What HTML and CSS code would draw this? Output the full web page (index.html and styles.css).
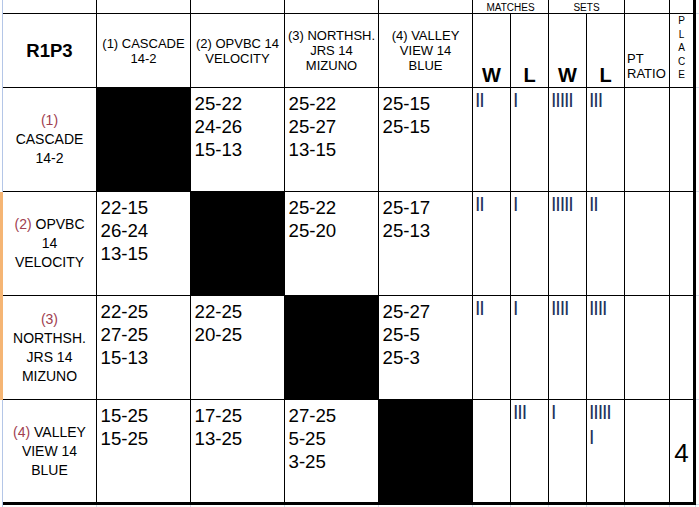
FILE: index.html
```html
<!DOCTYPE html>
<html>
<head>
<meta charset="utf-8">
<title>R1P3</title>
<link rel="stylesheet" href="styles.css">
</head>
<body>
<div class="sheet">
  <!-- top label row -->
  <div class="c"></div>
  <div class="c"></div>
  <div class="c"></div>
  <div class="c"></div>
  <div class="c"></div>
  <div class="c group">MATCHES</div>
  <div class="c group">SETS</div>
  <div class="c"></div>
  <div class="c last"></div>
  <div class="edge"></div>

  <!-- header row -->
  <div class="c pool">R1P3</div>
  <div class="c hteam"><span>(1) CASCADE<br>14-2</span></div>
  <div class="c hteam"><span>(2) OPVBC 14<br>VELOCITY</span></div>
  <div class="c hteam"><span>(3) NORTHSH.<br>JRS 14<br>MIZUNO</span></div>
  <div class="c hteam"><span>(4) VALLEY<br>VIEW 14<br>BLUE</span></div>
  <div class="c wl">W</div>
  <div class="c wl">L</div>
  <div class="c wl">W</div>
  <div class="c wl">L</div>
  <div class="c ratio"><span>PT<br>RATIO</span></div>
  <div class="c last place-h">P<br>L<br>A<br>C<br>E</div>
  <div class="edge"></div>

  <!-- team 1 -->
  <div class="c team"><span><span class="seed">(1)</span><br>CASCADE<br>14-2</span></div>
  <div class="c self"></div>
  <div class="c score">25-22<br>24-26<br>15-13</div>
  <div class="c score">25-22<br>25-27<br>13-15</div>
  <div class="c score">25-15<br>25-15</div>
  <div class="c tally">II</div>
  <div class="c tally">I</div>
  <div class="c tally">IIIII</div>
  <div class="c tally">III</div>
  <div class="c"></div>
  <div class="c last"></div>
  <div class="edge"></div>

  <!-- team 2 -->
  <div class="c team sel"><span><span class="seed">(2)</span> OPVBC<br>14<br>VELOCITY</span></div>
  <div class="c score">22-15<br>26-24<br>13-15</div>
  <div class="c self"></div>
  <div class="c score">25-22<br>25-20</div>
  <div class="c score">25-17<br>25-13</div>
  <div class="c tally">II</div>
  <div class="c tally">I</div>
  <div class="c tally">IIIII</div>
  <div class="c tally">II</div>
  <div class="c"></div>
  <div class="c last"></div>
  <div class="edge"></div>

  <!-- team 3 -->
  <div class="c team sel"><span><span class="seed">(3)</span><br>NORTHSH.<br>JRS 14<br>MIZUNO</span></div>
  <div class="c score">22-25<br>27-25<br>15-13</div>
  <div class="c score">22-25<br>20-25</div>
  <div class="c self"></div>
  <div class="c score">25-27<br>25-5<br>25-3</div>
  <div class="c tally">II</div>
  <div class="c tally">I</div>
  <div class="c tally">IIII</div>
  <div class="c tally">IIII</div>
  <div class="c"></div>
  <div class="c last"></div>
  <div class="edge"></div>

  <!-- team 4 -->
  <div class="c end team"><span><span class="seed">(4)</span> VALLEY<br>VIEW 14<br>BLUE</span></div>
  <div class="c end score">15-25<br>15-25</div>
  <div class="c end score">17-25<br>13-25</div>
  <div class="c end score">27-25<br>5-25<br>3-25</div>
  <div class="c end self"></div>
  <div class="c end tally"></div>
  <div class="c end tally">III</div>
  <div class="c end tally">I</div>
  <div class="c end tally">IIIII<br>I</div>
  <div class="c end"></div>
  <div class="c end last place">4</div>
  <div class="edge"></div>

  <!-- sheet gridlines below the table -->
  <div class="foot"></div><div class="foot"></div><div class="foot"></div><div class="foot"></div>
  <div class="foot"></div><div class="foot"></div><div class="foot"></div><div class="foot"></div>
  <div class="foot"></div><div class="foot"></div><div class="foot"></div><div class="foot"></div>
</div>
</body>
</html>
```

FILE: styles.css
```css
html, body {
  margin: 0;
  padding: 0;
  background: #fff;
}

body {
  font-family: "Liberation Sans", Arial, sans-serif;
  color: #000;
}

.sheet {
  display: grid;
  grid-template-columns: 94px 94px 94px 94px 94px 38px 38px 38px 38px 45px 26px 4px;
  grid-template-rows: 14px 74px 104px 104px 104px 105px 3px;
  margin-left: 2px;
  width: 693px;
  border-left: 1px solid #b4c6e7;
}

.c {
  box-sizing: border-box;
  border-right: 1px solid #000;
  border-bottom: 1px solid #000;
  min-width: 0;
}

.c.last {
  border-right: 3px solid #000;
}

.c.end {
  border-bottom: 3px solid #000;
}

.edge {
  box-sizing: border-box;
  border-bottom: 1px solid #d4dbe8;
}

.foot {
  box-sizing: border-box;
  border-right: 1px solid #d4dbe8;
}

/* top label row */
.group {
  grid-column: span 2;
  font-size: 10px;
  line-height: 13px;
  padding-top: 1px;
  text-align: center;
}

/* header row */
.pool {
  display: flex;
  align-items: center;
  justify-content: center;
  font-size: 18.5px;
  font-weight: bold;
}

.hteam {
  display: flex;
  align-items: center;
  justify-content: center;
  text-align: center;
  font-size: 13px;
  line-height: 15px;
}

.wl {
  display: flex;
  align-items: flex-end;
  justify-content: center;
  font-size: 20px;
  line-height: 20px;
  font-weight: bold;
  padding-bottom: 2px;
}

.ratio {
  display: flex;
  align-items: flex-end;
  font-size: 13px;
  line-height: 15px;
  padding: 0 0 6px 2px;
}

.place-h {
  text-align: center;
  font-size: 10px;
  line-height: 13.5px;
}

/* body rows */
.team {
  display: flex;
  align-items: center;
  justify-content: center;
  text-align: center;
  font-size: 14px;
  line-height: 19px;
  padding: 0 2px;
}

.team.sel {
  box-shadow: -3px 0 0 #f5b574;
}

.seed {
  color: #a0404f;
}

.self {
  background: #000;
}

.score {
  font-size: 18.67px;
  line-height: 23.3px;
  padding: 3.5px 0 0 3.5px;
}

.tally {
  font-size: 19.5px;
  line-height: 25px;
  letter-spacing: -1.1px;
  color: #23335e;
  padding: 0 0 0 2px;
}

.place {
  display: flex;
  align-items: center;
  justify-content: center;
  font-size: 26px;
  line-height: 30px;
  padding-top: 3px;
}
```
